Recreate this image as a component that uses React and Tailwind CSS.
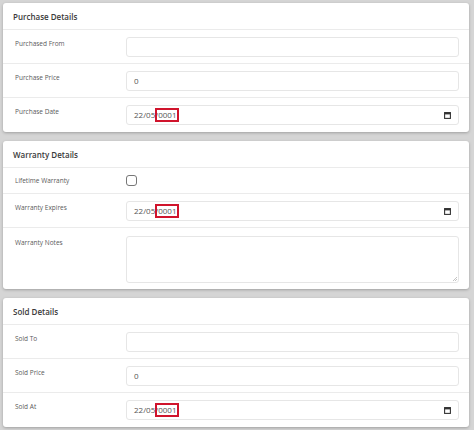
import React from 'react';

function DateValue() {
  return (
    <div className="flex h-[20px] w-full items-center rounded-[3px] border border-[#e6e6e6] bg-white pl-[7px] pr-[7px] text-[8px] text-[#555]">
      <span>22/05/</span>
      <span className="-ml-[3px] border-2 border-[#d0142c] pl-[1px] pr-[1px] leading-[10px]">0001</span>
      <span className="flex-1" />
      <svg width="7" height="7" viewBox="0 0 7 7" className="text-[#333]">
        <rect x="0.6" y="0.6" width="5.8" height="5.8" fill="none" stroke="currentColor" strokeWidth="1.1" />
        <rect x="0.6" y="0.6" width="5.8" height="1.8" fill="currentColor" />
      </svg>
    </div>
  );
}

function TextValue({ value }) {
  return (
    <div className="flex h-[20px] w-full items-center rounded-[3px] border border-[#e6e6e6] bg-white px-[7px] text-[8px] text-[#555]">
      {value}
    </div>
  );
}

function Row({ label, children, tall, last }) {
  return (
    <div
      className={
        'flex pl-[12px] pr-[10px] ' +
        (last ? '' : 'border-b border-[#ebebeb] ') +
        (tall ? 'h-[61px] pt-[8px]' : 'h-[34px] items-start pt-[7px]')
      }
    >
      <div className="w-[111px] pt-[2px] text-[6.5px] text-[#5a5a5a]">{label}</div>
      <div className="flex-1">{children}</div>
    </div>
  );
}

function Card({ title, children }) {
  return (
    <div className="w-[466px] rounded-[3px] bg-white shadow-[0_1px_3px_rgba(0,0,0,0.25)]">
      <div className="flex h-[27px] items-center border-b border-[#ebebeb] px-[10px] pt-[1px] text-[8px] font-semibold text-[#3a3a3a]">
        {title}
      </div>
      {children}
    </div>
  );
}

export default function App() {
  return (
    <div
      className="flex h-[430px] w-[474px] flex-col gap-[9px] overflow-hidden bg-[#d5d5d5] pl-[3px] pt-[3px]"
      style={{ fontFamily: '"Open Sans", "Noto Sans", sans-serif' }}
    >
      <Card title="Purchase Details">
        <Row label="Purchased From">
          <TextValue value="" />
        </Row>
        <Row label="Purchase Price">
          <TextValue value="0" />
        </Row>
        <Row label="Purchase Date" last>
          <DateValue />
        </Row>
      </Card>

      <Card title="Warranty Details">
        <div className="flex h-[26px] items-center border-b border-[#ebebeb] px-[12px]">
          <div className="w-[111px] text-[6.5px] text-[#5a5a5a]">Lifetime Warranty</div>
          <div className="h-[11px] w-[11px] rounded-[3px] border border-[#777] bg-white" />
        </div>
        <Row label="Warranty Expires">
          <DateValue />
        </Row>
        <Row label="Warranty Notes" tall last>
          <div className="relative h-[47px] w-full rounded-[3px] border border-[#e6e6e6] bg-white">
            <svg width="5" height="5" viewBox="0 0 5 5" className="absolute bottom-[1px] right-[1px] text-[#aaa]">
              <path d="M1 5 L5 1 M3 5 L5 3" stroke="currentColor" strokeWidth="0.7" />
            </svg>
          </div>
        </Row>
      </Card>

      <Card title="Sold Details">
        <Row label="Sold To">
          <TextValue value="" />
        </Row>
        <Row label="Sold Price">
          <TextValue value="0" />
        </Row>
        <Row label="Sold At" last>
          <DateValue />
        </Row>
      </Card>
    </div>
  );
}
